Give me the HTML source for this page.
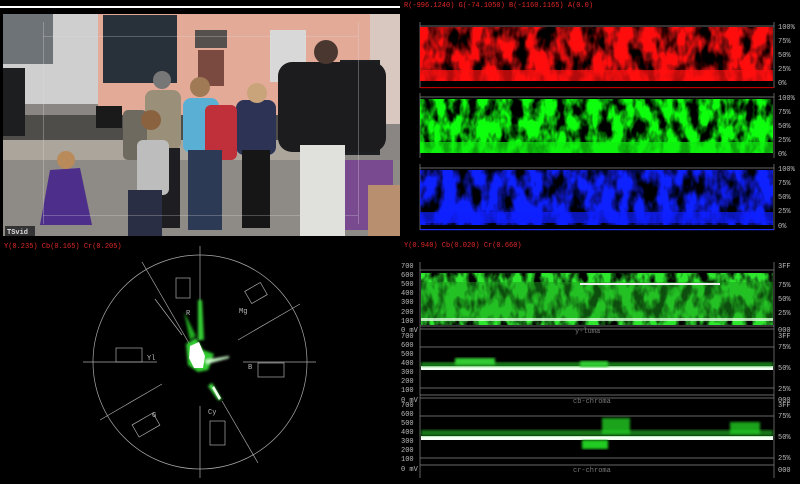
<!DOCTYPE html>
<html><head><meta charset="utf-8"><style>
html,body{margin:0;padding:0;background:#000;width:800px;height:484px;overflow:hidden}
svg{display:block}
text{font-family:"Liberation Mono",monospace;font-size:7px;fill:#bbb}
.r{fill:#e02828}
</style></head><body>
<svg width="800" height="484" viewBox="0 0 800 484" xmlns="http://www.w3.org/2000/svg">
<defs>
<filter id="nz" x="0" y="0" width="100%" height="100%">
<feTurbulence type="fractalNoise" baseFrequency="0.07 0.04" numOctaves="3" seed="3" result="t"/>
<feColorMatrix in="t" type="matrix" values="0 0 0 0 0  0 0 0 0 0  0 0 0 0 0  3.4 0 0 0 -1.05" result="a"/>
<feComposite in="SourceGraphic" in2="a" operator="in"/>
</filter>
<filter id="nz2" x="0" y="0" width="100%" height="100%">
<feTurbulence type="fractalNoise" baseFrequency="0.09 0.05" numOctaves="3" seed="8" result="t"/>
<feColorMatrix in="t" type="matrix" values="0 0 0 0 0  0 0 0 0 0  0 0 0 0 0  3.4 0 0 0 -1.05" result="a"/>
<feComposite in="SourceGraphic" in2="a" operator="in"/>
</filter>
<filter id="bl"><feGaussianBlur stdDeviation="1.2"/></filter>
</defs>

<!-- photo -->
<rect x="0" y="6" width="400" height="2" fill="#fff"/>
<rect x="3" y="14" width="397" height="222" fill="#8a8683"/>
<rect x="3" y="14" width="97" height="90" fill="#cfcfcf"/>
<rect x="3" y="14" width="50" height="50" fill="#6e7378"/>
<rect x="98" y="14" width="272" height="110" fill="#e3aa98"/>
<rect x="103" y="15" width="74" height="68" fill="#28303a"/>
<rect x="370" y="14" width="30" height="110" fill="#d8c8c0"/>
<rect x="195" y="30" width="32" height="18" fill="#55504e"/>
<rect x="270" y="30" width="36" height="52" fill="#d8d8d8"/>
<rect x="198" y="50" width="26" height="36" fill="#7a4a40"/>
<rect x="3" y="115" width="370" height="30" fill="#4f4d4a"/>
<rect x="3" y="140" width="300" height="20" fill="#aca59b"/>
<rect x="3" y="160" width="397" height="76" fill="#8e8a86"/>
<rect x="3" y="68" width="22" height="68" fill="#1d1e20"/>
<rect x="340" y="60" width="40" height="95" fill="#1e1f22"/>
<rect x="96" y="106" width="26" height="22" fill="#1a1a1a"/>
<rect x="278" y="62" width="108" height="90" rx="14" fill="#1c1c1e"/>
<circle cx="326" cy="52" r="12" fill="#4a3830"/>
<rect x="300" y="145" width="45" height="91" fill="#e0e0dc"/>
<rect x="236" y="100" width="40" height="55" rx="8" fill="#2c3355"/>
<rect x="242" y="150" width="28" height="78" fill="#161616"/>
<circle cx="257" cy="93" r="10" fill="#c9a37a"/>
<rect x="183" y="98" width="36" height="55" rx="8" fill="#5ab0d4"/>
<rect x="205" y="105" width="32" height="55" rx="6" fill="#c0303a"/>
<rect x="188" y="150" width="34" height="80" fill="#2d3a55"/>
<circle cx="200" cy="87" r="10" fill="#a07a55"/>
<rect x="145" y="90" width="36" height="60" rx="8" fill="#9a8f78"/>
<rect x="155" y="148" width="25" height="80" fill="#1e1e22"/>
<circle cx="162" cy="80" r="9" fill="#777"/>
<rect x="123" y="110" width="24" height="50" rx="5" fill="#6e6a60"/>
<rect x="137" y="140" width="32" height="55" rx="6" fill="#bdbdbd"/>
<rect x="128" y="190" width="34" height="46" fill="#2a2e44"/>
<circle cx="151" cy="120" r="10" fill="#8a6240"/>
<path d="M40,225 L50,170 L80,168 L92,225 Z" fill="#4d2e8a"/>
<circle cx="66" cy="160" r="9" fill="#b98a5a"/>
<rect x="345" y="160" width="48" height="70" fill="#7a4a90"/>
<rect x="368" y="185" width="32" height="51" fill="#b89070"/>
<rect x="5" y="226" width="30" height="10" fill="#333"/>
<text x="7" y="234" style="fill:#ddd;font-size:7px;font-weight:bold">TSvid</text>
<rect x="43" y="22" width="0.8" height="202" fill="#ddd" opacity=".4"/>
<rect x="358" y="22" width="0.8" height="202" fill="#ddd" opacity=".4"/>
<rect x="43" y="36" width="315" height="0.8" fill="#ddd" opacity=".35"/>
<rect x="43" y="215" width="315" height="0.8" fill="#ddd" opacity=".35"/>

<!-- RGB parade -->
<text x="404" y="7" class="r">R(-996.1240) G(-74.1050) B(-1160.1165) A(0.0)</text>
<g stroke="#888" stroke-width="0.7">
<line x1="420" y1="22" x2="420" y2="88"/><line x1="774" y1="22" x2="774" y2="88"/>
<line x1="420" y1="93" x2="420" y2="158"/><line x1="774" y1="93" x2="774" y2="158"/>
<line x1="420" y1="164" x2="420" y2="230"/><line x1="774" y1="164" x2="774" y2="230"/>
<line x1="420" y1="26" x2="774" y2="26"/><line x1="420" y1="97" x2="774" y2="97"/><line x1="420" y1="168" x2="774" y2="168"/>
</g>
<rect x="420" y="27" width="353" height="54" fill="#ff1010" filter="url(#nz)"/>
<rect x="420" y="70" width="353" height="11" fill="#ff1010" opacity=".7"/>
<rect x="420" y="87" width="354" height="1.2" fill="#b00"/>
<rect x="420" y="99" width="353" height="54" fill="#10ff10" filter="url(#nz2)"/>
<rect x="420" y="142" width="353" height="11" fill="#10ee10" opacity=".7"/>
<rect x="420" y="170" width="353" height="55" fill="#1020ff" filter="url(#nz)"/>
<rect x="420" y="212" width="353" height="11" fill="#1020ff" opacity=".7"/>
<rect x="420" y="229" width="354" height="1.2" fill="#2030ff"/>
<g>
<text x="778" y="29">100%</text><text x="778" y="43">75%</text><text x="778" y="57">50%</text><text x="778" y="71">25%</text><text x="778" y="85">0%</text>
<text x="778" y="100">100%</text><text x="778" y="114">75%</text><text x="778" y="128">50%</text><text x="778" y="142">25%</text><text x="778" y="156">0%</text>
<text x="778" y="171">100%</text><text x="778" y="185">75%</text><text x="778" y="199">50%</text><text x="778" y="213">25%</text><text x="778" y="228">0%</text>
</g>

<!-- YCbCr waveforms -->
<text x="404" y="247" class="r">Y(0.940) Cb(0.020) Cr(0.660)</text>
<g stroke="#888" stroke-width="0.7">
<line x1="420" y1="262" x2="420" y2="478"/><line x1="774" y1="262" x2="774" y2="478"/>
<line x1="420" y1="270" x2="774" y2="270"/><line x1="420" y1="326" x2="774" y2="326"/><line x1="420" y1="329" x2="774" y2="329"/>
<line x1="420" y1="347" x2="774" y2="347"/><line x1="420" y1="388" x2="774" y2="388"/><line x1="420" y1="395" x2="774" y2="395"/><line x1="420" y1="398" x2="774" y2="398"/>
<line x1="420" y1="416" x2="774" y2="416"/><line x1="420" y1="458" x2="774" y2="458"/><line x1="420" y1="465" x2="774" y2="465"/>
</g>
<rect x="421" y="273" width="352" height="52" fill="#2ee82e" filter="url(#nz2)"/>
<rect x="421" y="282" width="352" height="38" fill="#1a9a1a" opacity=".5"/>
<rect x="421" y="318" width="352" height="3" fill="#ddffdd" opacity=".8"/>
<rect x="580" y="283" width="140" height="2" fill="#eee"/>
<rect x="421" y="366" width="352" height="4" fill="#f4fff4"/>
<rect x="421" y="362" width="352" height="5" fill="#2a2" opacity=".7" filter="url(#bl)"/>
<rect x="455" y="358" width="40" height="7" fill="#3c3" filter="url(#bl)"/>
<rect x="580" y="361" width="28" height="6" fill="#3c3" filter="url(#bl)"/>
<rect x="421" y="436" width="352" height="4" fill="#f4fff4"/>
<rect x="421" y="430" width="352" height="6" fill="#2a2" opacity=".7" filter="url(#bl)"/>
<rect x="582" y="440" width="26" height="9" fill="#2c2" filter="url(#bl)"/>
<rect x="602" y="418" width="28" height="16" fill="#2c2" opacity=".8" filter="url(#bl)"/>
<rect x="730" y="422" width="30" height="12" fill="#2c2" opacity=".8" filter="url(#bl)"/>
<g>
<text x="401" y="268">700</text><text x="401" y="277">600</text><text x="401" y="286">500</text><text x="401" y="295">400</text><text x="401" y="304">300</text><text x="401" y="314">200</text><text x="401" y="323">100</text><text x="401" y="332">0 mV</text>
<text x="401" y="338">700</text><text x="401" y="347">600</text><text x="401" y="356">500</text><text x="401" y="365">400</text><text x="401" y="374">300</text><text x="401" y="383">200</text><text x="401" y="392">100</text><text x="401" y="402">0 mV</text>
<text x="401" y="407">700</text><text x="401" y="416">600</text><text x="401" y="425">500</text><text x="401" y="434">400</text><text x="401" y="443">300</text><text x="401" y="452">200</text><text x="401" y="461">100</text><text x="401" y="471">0 mV</text>
<text x="778" y="268">3FF</text><text x="778" y="287">75%</text><text x="778" y="301">50%</text><text x="778" y="315">25%</text><text x="778" y="332">000</text>
<text x="778" y="338">3FF</text><text x="778" y="349">75%</text><text x="778" y="370">50%</text><text x="778" y="391">25%</text><text x="778" y="402">000</text>
<text x="778" y="407">3FF</text><text x="778" y="418">75%</text><text x="778" y="439">50%</text><text x="778" y="460">25%</text><text x="778" y="472">000</text>
<text x="575" y="333" style="fill:#777">y-luma</text><text x="573" y="403" style="fill:#777">cb-chroma</text><text x="573" y="472" style="fill:#777">cr-chroma</text>
</g>

<!-- vectorscope -->
<text x="4" y="248" class="r">Y(0.235) Cb(0.165) Cr(0.205)</text>
<g stroke="#aaa" stroke-width="0.7" fill="none">
<circle cx="200" cy="362" r="107"/>
<line x1="200" y1="246" x2="200" y2="340"/><line x1="200" y1="406" x2="200" y2="478"/>
<line x1="83" y1="362" x2="157" y2="362"/><line x1="243" y1="362" x2="316" y2="362"/>
<line x1="142" y1="262" x2="190" y2="345"/><line x1="222" y1="401" x2="258" y2="463"/>
<line x1="300" y1="304" x2="238" y2="340"/><line x1="100" y1="420" x2="162" y2="384"/>
<line x1="155" y1="299" x2="182" y2="335"/>
<rect x="176" y="278" width="14" height="20"/><rect x="247" y="286" width="18" height="14" transform="rotate(-30 256 293)"/>
<rect x="116" y="348" width="26" height="14"/><rect x="258" y="363" width="26" height="14"/>
<rect x="134" y="418" width="24" height="14" transform="rotate(-30 146 425)"/><rect x="210" y="421" width="15" height="24"/>
</g>
<text x="186" y="315">R</text><text x="239" y="313">Mg</text><text x="147" y="360">Yl</text><text x="248" y="369">B</text><text x="152" y="417">G</text><text x="208" y="414">Cy</text>
<g filter="url(#bl)">
<path d="M186,344 L196,338 L203,350 L214,354 L208,370 L198,372 L188,365 Z" fill="#3c3"/>
<path d="M184,312 L196,336 L190,340 Z" fill="#2a2"/>
<path d="M198,300 L202,300 L204,340 L198,340 Z" fill="#3c3"/>
<path d="M212,383 L222,400 L218,400 L208,386 Z" fill="#4d4"/>
<path d="M205,360 L229,356 L229,358 L207,364 Z" fill="#cfc"/>
</g>
<path d="M190,346 L199,342 L205,356 L203,368 L194,368 L189,358 Z" fill="#fff"/>
<path d="M214,386 L221,398 L219,400 L212,388 Z" fill="#efe"/>
</svg>
</body></html>
